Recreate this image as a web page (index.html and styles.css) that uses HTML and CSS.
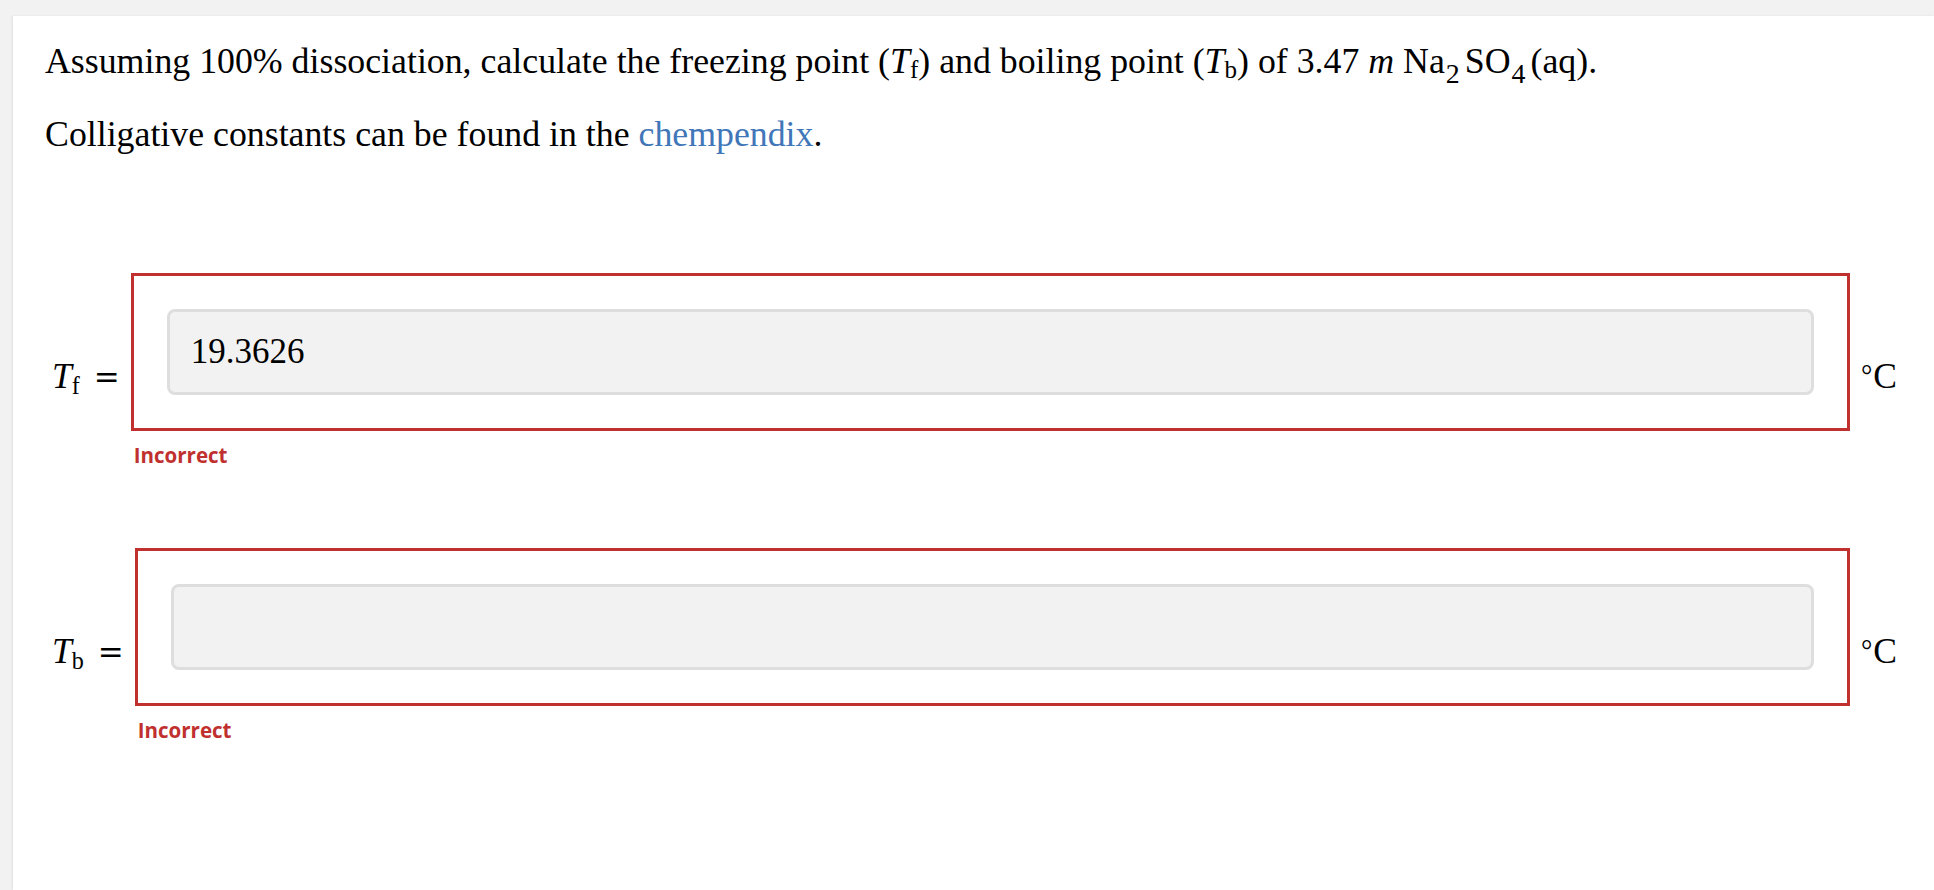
FILE: index.html
```html
<!DOCTYPE html>
<html lang="en">
<head>
	<meta charset="UTF-8">
	<title>Colligative properties</title>
	<link rel="stylesheet" href="styles.css">
</head>
<body>
	<div class="panel">
		<p class="q">Assuming 100% dissociation, calculate the freezing point (<i>T</i><sub class="ts">f</sub>) and boiling point (<i>T</i><sub class="ts">b</sub>) of 3.47 <i>m</i> Na<sub class="cs">2</sub>SO<sub class="cs">4</sub>(aq).</p>
		<p class="q q2">Colligative constants can be found in the <a href="#">chempendix</a>.</p>

		<div class="answers">
			<div class="row">
				<div class="label"><i>T</i><sub class="ls">f</sub><span class="eq">=</span></div>
				<div class="field">
					<div class="box wrong">
						<input type="text" class="inp" value="19.3626">
					</div>
					<div class="msg">Incorrect</div>
				</div>
				<div class="unit"><span class="deg">&deg;</span>C</div>
			</div>
			<div class="row">
				<div class="label"><i>T</i><sub class="ls">b</sub><span class="eq">=</span></div>
				<div class="field">
					<div class="box wrong">
						<input type="text" class="inp" value="">
					</div>
					<div class="msg">Incorrect</div>
				</div>
				<div class="unit"><span class="deg">&deg;</span>C</div>
			</div>
		</div>
	</div>
</body>
</html>
```

FILE: styles.css
```css
/* page 1934 x 890 */
body{
	margin:0;
	background:#f2f2f2;
	font-family:"Liberation Serif","Times New Roman",serif;
	color:#000;
}
.panel{
	margin:16px 0 0 13px;
	min-height:calc(100vh - 16px);
	box-sizing:border-box;
	background:#fff;
	box-shadow:-1px 0 2px rgba(0,0,0,.08);
	padding:24px 37px 0 32px;
}
.q{
	margin:0;
	font-size:35.8px;
	line-height:1.2;
}
.q2{
	margin-top:30px;
}
.q a{
	color:#4177b8;
	text-decoration:none;
}
sub{
	line-height:0;
}
.q .ts{
	font-size:.7em;
	vertical-align:-5px;
}
.q .cs{
	font-size:.78em;
	vertical-align:-10px;
	margin:0 5px 0 1px;
}

.answers{
	margin-top:117px;
}
.row{
	display:flex;
	align-items:flex-start;
	margin-bottom:79px;
}
.label{
	padding:82px 0 0 7px;
	font-size:35.5px;
	line-height:1.2;
	white-space:nowrap;
}
.label .ls{
	font-size:.68em;
	vertical-align:-6px;
}
.label .eq{
	display:inline-block;
	margin:0 11px 0 14px;
	font-family:"DejaVu Serif",serif;
	font-size:31px;
}
.field{
	flex:1;
}
.box{
	border:3px solid #c0302e;
	padding:33px;
}
.inp{
	display:block;
	width:100%;
	height:86px;
	box-sizing:border-box;
	margin:0;
	border:3px solid #dedede;
	border-radius:8px;
	background:#f2f2f2;
	padding:0 21px;
	font-family:"Liberation Serif","Times New Roman",serif;
	font-size:35px;
	color:#000;
	outline:none;
}
.msg{
	margin-top:10px;
	padding-left:3px;
	font-family:"Open Sans",sans-serif;
	font-weight:700;
	font-size:20.5px;
	color:#c0302e;
}
.unit{
	padding-top:82px;
	margin-left:11px;
	font-size:35.5px;
	line-height:1.2;
	white-space:nowrap;
}
.unit .deg{
	font-size:.8em;
	vertical-align:.12em;
	margin-right:1px;
}
```
